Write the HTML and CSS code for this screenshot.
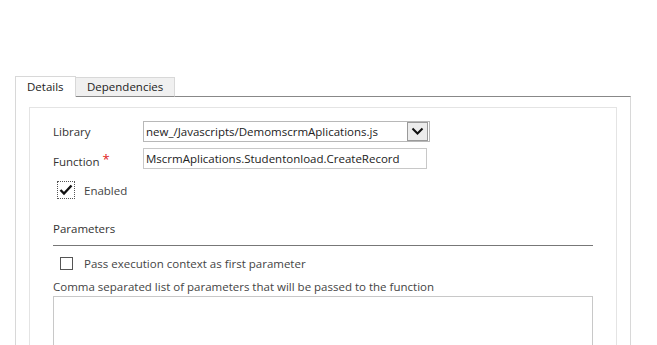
FILE: index.html
```html
<!DOCTYPE html>
<html>
<head>
<meta charset="utf-8">
<link rel="stylesheet" href="styles.css">
</head>
<body>
<div class="page">
  <div class="tabs">
    <div class="tab active">Details</div>
    <div class="tab">Dependencies</div>
    <div class="tab-fill"></div>
  </div>
  <div class="outer">
    <div class="inner">
      <div class="row row-lib">
        <div class="label">Library</div>
        <div class="select">
          <span class="select-text">new_/Javascripts/DemomscrmAplications.js</span>
          <span class="select-btn"><svg width="13" height="9" viewBox="0 0 13 9"><path d="M1.5 1.5 L6.5 6.5 L11.5 1.5" fill="none" stroke="#111" stroke-width="2"/></svg></span>
        </div>
      </div>
      <div class="row row-fn">
        <div class="label label-fn">Function <span class="req">*</span></div>
        <div class="input">MscrmAplications.Studentonload.CreateRecord</div>
      </div>
      <div class="row row-en">
        <span class="cb checked"><svg width="14" height="12" viewBox="0 0 14 12"><path d="M1.5 6 L5 9.5 L12.5 1.5" fill="none" stroke="#111" stroke-width="2.4"/></svg></span>
        <span class="cb-label">Enabled</span>
      </div>
      <div class="section">Parameters</div>
      <div class="row row-pass">
        <span class="cb2"></span>
        <span class="cb-label">Pass execution context as first parameter</span>
      </div>
      <div class="comma">Comma separated list of parameters that will be passed to the function</div>
      <div class="textarea"></div>
    </div>
  </div>
</div>
</body>
</html>
```
FILE: styles.css
```css
html, body {
  margin: 0;
  padding: 0;
  background: #fff;
  overflow: hidden;
}
body {
  font-family: "Open Sans", "Noto Sans", sans-serif;
  font-size: 11.5px;
  color: #444;
}
.page {
  padding: 76px 0 0 15px;
  width: 616px;
}
.tabs {
  display: flex;
  align-items: flex-end;
  height: 21px;
}
.tab {
  box-sizing: border-box;
  height: 21px;
  padding: 0 11px;
  line-height: 20px;
  color: #222;
  border: 1px solid #d8d8d8;
  border-bottom: none;
  background: #fff;
}
.tab.active {
  width: 61px;
  padding-left: 11px;
}
.tab:not(.active) {
  height: 20px;
  width: 99px;
  padding-left: 11px;
  background: #f0f0f0;
  border-left: none;
  border-bottom: 1px solid #888;
  line-height: 18px;
}
.tab-fill {
  flex: 1;
  border-bottom: 1px solid #888;
  border-right: 1px solid #d8d8d8;
  height: 0;
}
.outer {
  border-left: 1px solid #d8d8d8;
  border-right: 1px solid #d8d8d8;
  padding: 10px 13px 0 13px;
  height: 300px;
}
.inner {
  border: 1px solid #e4e4e4;
  border-bottom: none;
  padding: 13px 23px 0 23px;
  height: 300px;
}
.row {
  display: flex;
  align-items: center;
}
.label {
  width: 90px;
  color: #333;
}
.row-fn {
  margin-top: 6px;
  align-items: flex-start;
}
.label-fn {
  margin-top: 6px;
  line-height: 16px;
  height: 17px;
}
.req {
  color: #e02020;
  font-size: 13px;
  line-height: 10px;
  vertical-align: 2px;
}
.select {
  box-sizing: border-box;
  width: 287px;
  height: 21px;
  border: 1px solid #b8b8b8;
  display: flex;
  align-items: center;
  justify-content: space-between;
  padding-left: 2px;
  color: #222;
}
.select-btn {
  box-sizing: border-box;
  width: 21px;
  height: 19px;
  border: 1px solid #9a9a9a;
  background: #ececec;
  display: flex;
  align-items: center;
  justify-content: center;
  margin-right: 1px;
}
.input {
  box-sizing: border-box;
  width: 284px;
  height: 21px;
  border: 1px solid #c8c8c8;
  padding-left: 2px;
  line-height: 19px;
  color: #222;
}
.row-en {
  margin-top: 10px;
  padding-left: 4px;
}
.cb {
  box-sizing: border-box;
  width: 18px;
  height: 18px;
  border: 1px dotted #555;
  display: flex;
  align-items: center;
  justify-content: center;
}
.cb-label {
  margin-left: 9px;
}
.section {
  margin-top: 22px;
  padding-bottom: 8px;
  border-bottom: 1px solid #777;
  color: #333;
  line-height: 16px;
}
.row-pass {
  margin-top: 10px;
  padding-left: 7px;
}
.cb2 {
  box-sizing: border-box;
  width: 13px;
  height: 13px;
  border: 1px solid #555;
  background: #fff;
}
.row-pass .cb-label {
  margin-left: 11px;
}
.comma {
  margin-top: 8px;
  line-height: 16px;
}
.textarea {
  margin-top: 1px;
  border: 1px solid #c8c8c8;
  height: 80px;
}
```
